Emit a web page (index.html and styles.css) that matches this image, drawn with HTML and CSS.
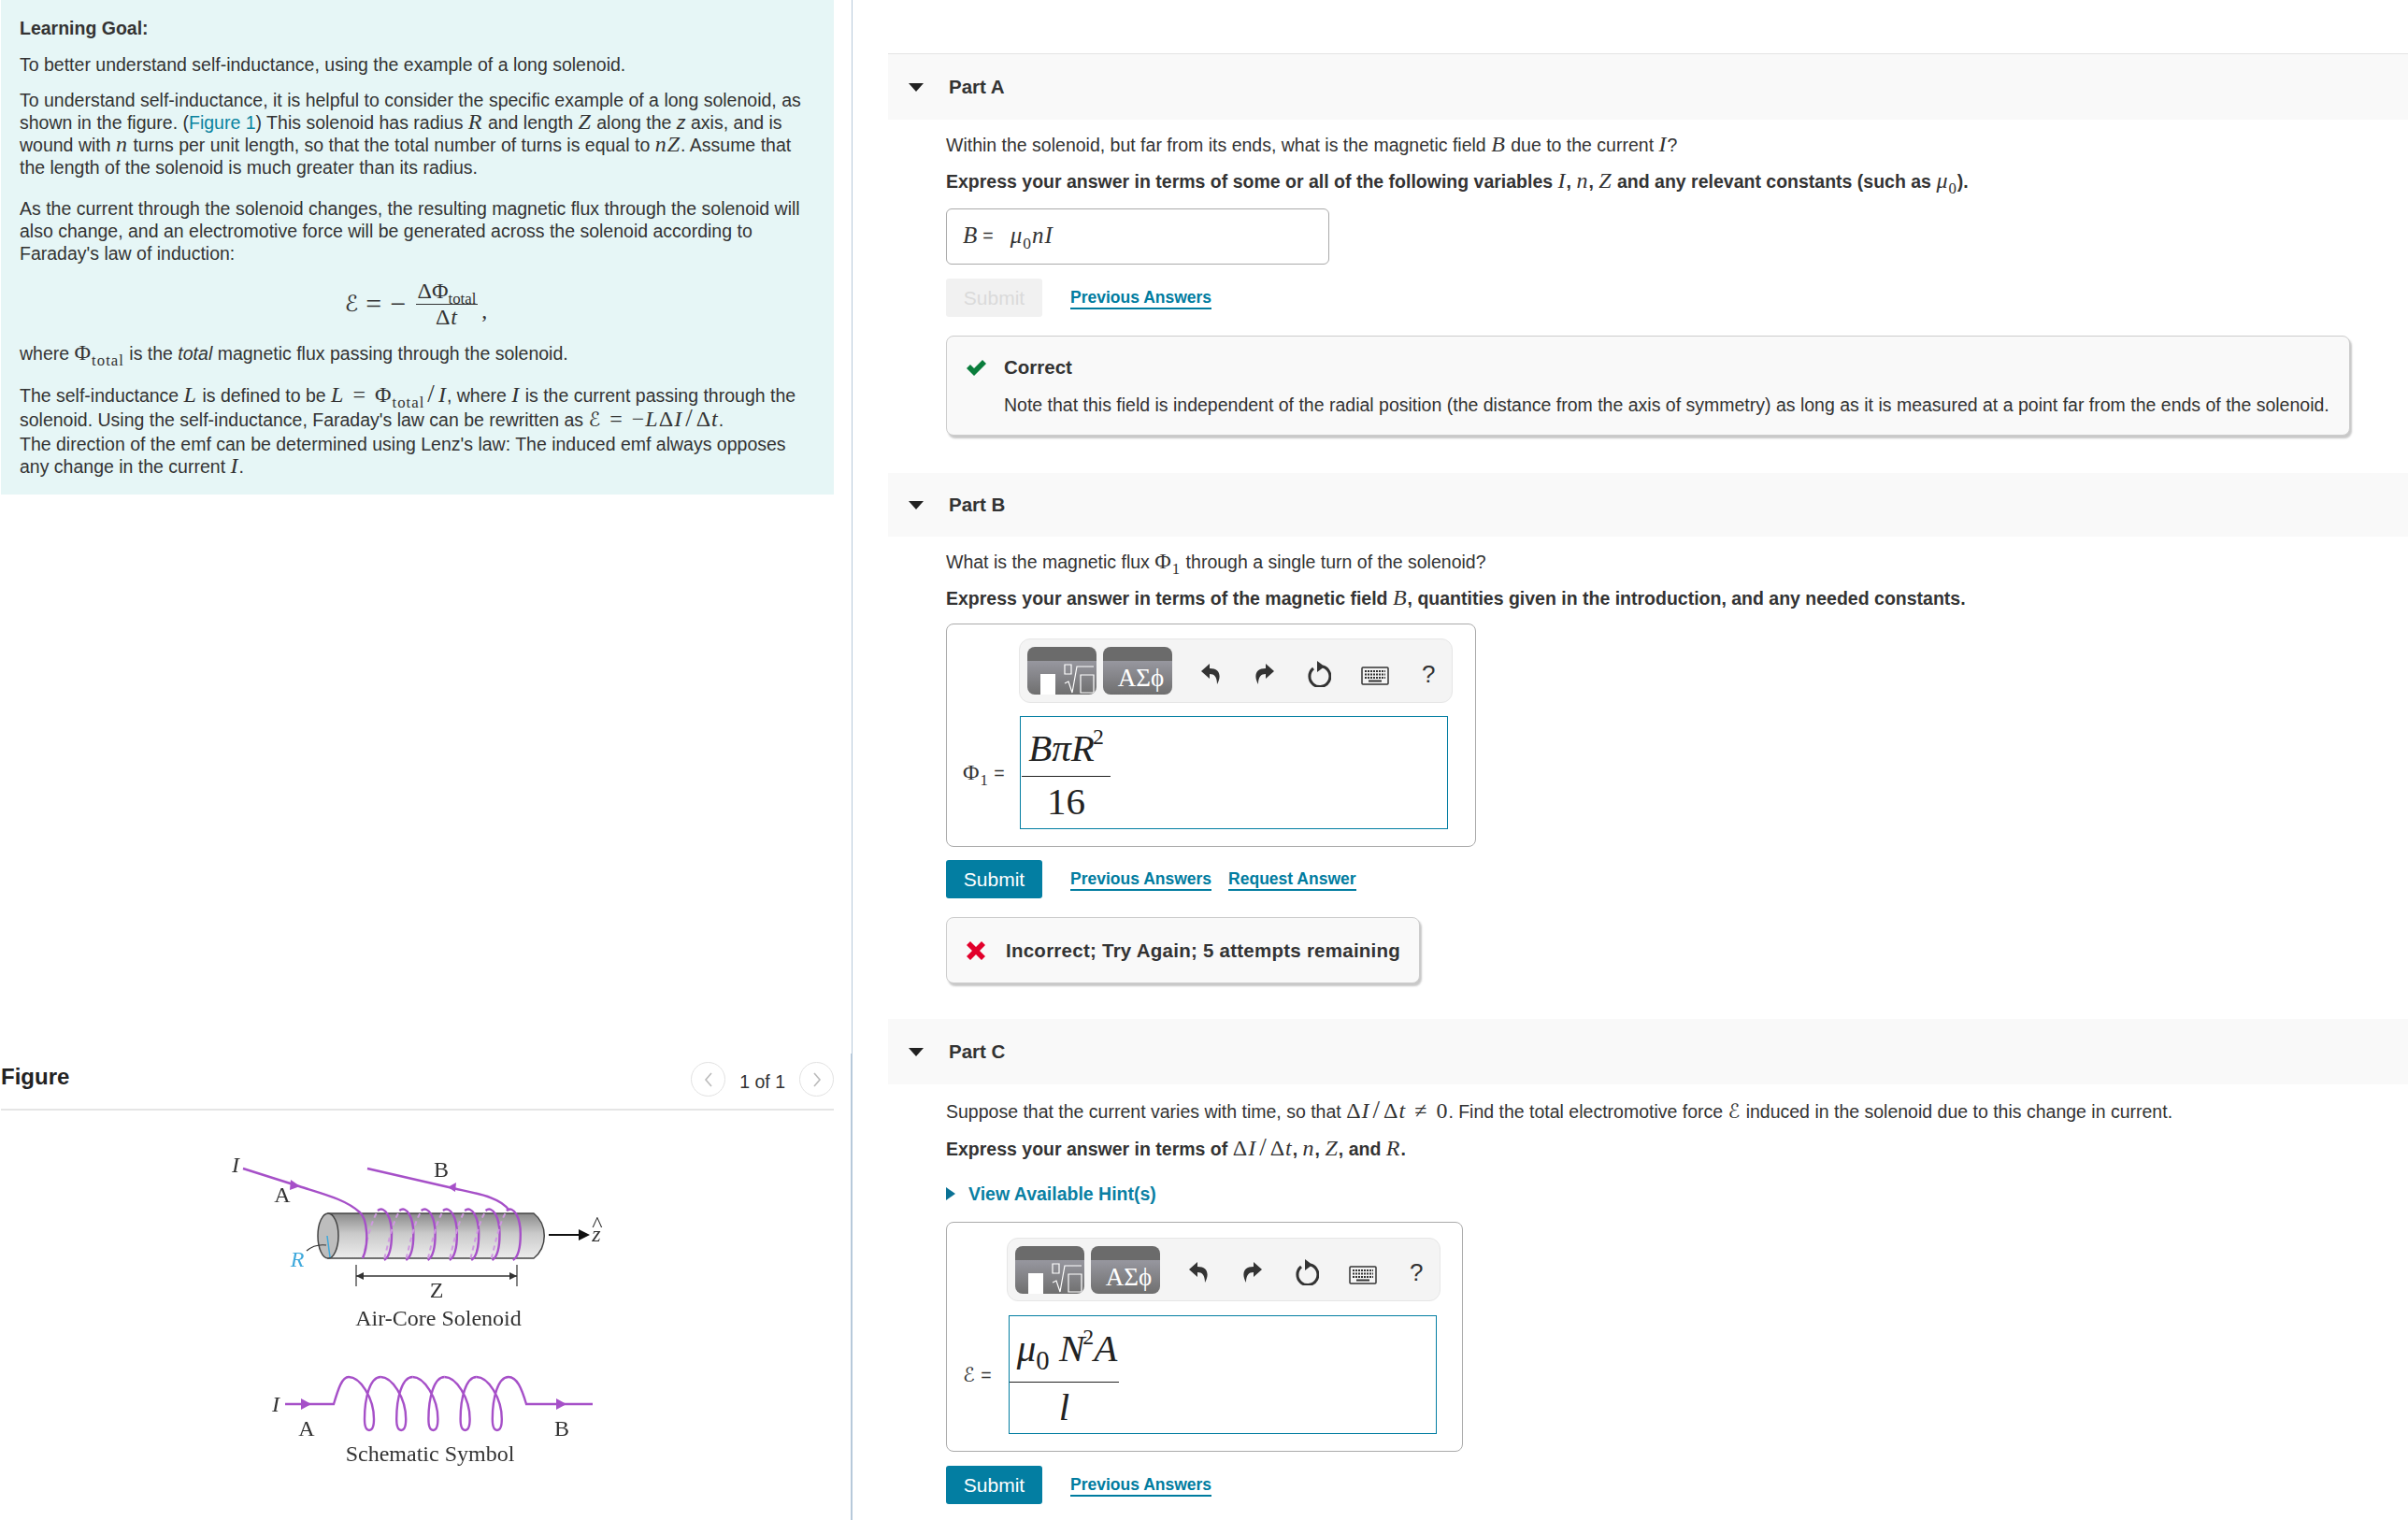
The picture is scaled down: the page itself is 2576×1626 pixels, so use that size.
FILE: index.html
```html
<!DOCTYPE html>
<html lang="en">
<head>
    <meta charset="UTF-8">
    <meta name="viewport" content="width=device-width, initial-scale=1.0">
    <title>Self-Inductance of a Long Solenoid</title>
    <link rel="stylesheet" href="styles.css">
</head>
<body>

<svg class="defs" width="0" height="0">
    <defs>
        <path id="icon-undo" d="M10 1 L1 9 L10 17 V12 C15 12 18 15 18 23 C23 14 21 6 10 6 Z"/>
        <path id="icon-redo" d="M12 1 L21 9 L12 17 V12 C7 12 4 15 4 23 C-1 14 1 6 12 6 Z"/>
    </defs>
</svg>

<div class="page">
    <aside class="left">
        <div class="left-top">
            <div class="intro">
                <p class="goal"><b>Learning Goal:</b></p>
                <p class="goal-text">To better understand self-inductance, using the example of a long solenoid.</p>
                <p class="para-1">To understand self-inductance, it is helpful to consider the specific example of a long solenoid, as shown in the figure. (<a class="fig-link">Figure 1</a>) This solenoid has radius <i class="m">R</i> and length <i class="m">Z</i> along the <i>z</i> axis, and is wound with <i class="m">n</i> turns per unit length, so that the total number of turns is equal to <i class="m">nZ</i>. Assume that the length of the solenoid is much greater than its radius.</p>
                <p class="para-2">As the current through the solenoid changes, the resulting magnetic flux through the solenoid will also change, and an electromotive force will be generated across the solenoid according to Faraday's law of induction:</p>
                <div class="equation">
                    <span class="m cal eq-e">ℰ</span><span class="m eq-sign">= −</span>
                    <span class="small-frac">
                        <span class="small-num m">ΔΦ<sub>total</sub></span>
                        <span class="small-den m">Δ<i>t</i></span>
                    </span><span class="m eq-comma">,</span>
                </div>
                <p class="para-3">where <span class="m">Φ<sub>total</sub></span> is the <i>total</i> magnetic flux passing through the solenoid.</p>
                <p class="para-4">The self-inductance <i class="m">L</i> is defined to be <i class="m">L</i><span class="m rel">=</span><span class="m">Φ<sub>total</sub><span class="sl">/</span><i>I</i></span>, where <i class="m">I</i> is the current passing through the solenoid. Using the self-inductance, Faraday's law can be rewritten as <span class="m cal">ℰ</span><span class="m rel">=</span><span class="m">−<i>L</i>Δ<i>I</i><span class="sl">/</span>Δ<i>t</i></span>.</p>
                <p class="para-5">The direction of the emf can be determined using Lenz's law: The induced emf always opposes any change in the current <i class="m">I</i>.</p>
            </div>
        </div>

        <div class="figure">
            <div class="figure-head">
                <h3>Figure</h3>
                <div class="pager">
                    <span class="pager-btn"><svg width="10" height="18" viewBox="0 0 10 18"><path d="M8 2 L2 9 L8 16" fill="none" stroke="#bbb" stroke-width="1.6"/></svg></span>
                    <span class="pager-text">1 of 1</span>
                    <span class="pager-btn"><svg width="10" height="18" viewBox="0 0 10 18"><path d="M2 2 L8 9 L2 16" fill="none" stroke="#bbb" stroke-width="1.6"/></svg></span>
                </div>
            </div>

            <svg class="figure-art" width="420" height="380" viewBox="230 1210 420 380">
                <defs>
                    <linearGradient id="core" x1="0" y1="0" x2="0" y2="1">
                        <stop offset="0" stop-color="#8a8a8a"/>
                        <stop offset="0.45" stop-color="#cacaca"/>
                        <stop offset="1" stop-color="#ececec"/>
                    </linearGradient>
                    <g id="turn">
                        <path d="M388 1346 C392 1330 397 1306 404 1296" class="wire-back"/>
                        <path d="M404 1295 C412 1289 419 1303 419 1320 C419 1335 416 1345 411 1348" class="wire"/>
                    </g>
                    <path id="loop" d="M373 1473 C385 1473 400 1495 400 1518 C400 1526 398 1530 395 1530 C392 1530 390 1526 390 1518 C390 1495 396 1473 407.200 1473" class="wire"/>
                </defs>

                <path d="M351 1298 H571 C586 1310 586 1334 571 1346 H351 Z" fill="url(#core)" stroke="#444" stroke-width="1.500"/>
                <ellipse cx="351" cy="1322" rx="11" ry="24" fill="#bdbdbd" stroke="#444" stroke-width="1.500"/>

                <use href="#turn"/>
                <use href="#turn" x="23.300"/>
                <use href="#turn" x="46.600"/>
                <use href="#turn" x="69.900"/>
                <use href="#turn" x="93.200"/>
                <use href="#turn" x="115.500"/>
                <use href="#turn" x="137.800"/>

                <path d="M260 1250 L320 1269 C345 1277 370 1283 385 1297 C393 1304 395 1330 388 1346" class="wire"/>
                <path d="M393 1250 L480 1270 C510 1277 535 1280 545 1295" class="wire"/>
                <path d="M321 1269 L311 1262 L310 1273 Z" class="wire-fill"/>
                <path d="M479 1270 L488 1265 L487 1275 Z" class="wire-fill"/>

                <path d="M350 1322 L353 1345" stroke="#3fa9dc" stroke-width="1.500" fill="none"/>
                <path d="M328 1338 C335 1332 341 1331 349 1332" stroke="#333" stroke-width="1.200" fill="none"/>

                <path d="M587 1321 H622" stroke="#111" stroke-width="1.800"/>
                <path d="M631 1321 L619 1315 V1327 Z" fill="#111"/>

                <path d="M381 1353 V1376 M553 1353 V1376" stroke="#333" stroke-width="1.200"/>
                <path d="M381 1365 H553" stroke="#333" stroke-width="1.500"/>
                <path d="M381 1365 L389 1361 V1369 Z M553 1365 L545 1361 V1369 Z" fill="#333"/>

                <text x="252" y="1254" class="fig-label italic" text-anchor="middle">I</text>
                <text x="302" y="1286" class="fig-label" text-anchor="middle">A</text>
                <text x="472" y="1259" class="fig-label" text-anchor="middle">B</text>
                <text x="318" y="1355" class="fig-label italic blue" text-anchor="middle">R</text>
                <text x="638" y="1328" class="fig-label italic" text-anchor="middle">z</text>
                <text x="639" y="1317" class="fig-label" text-anchor="middle">^</text>
                <text x="467" y="1388" class="fig-label" text-anchor="middle">Z</text>
                <text x="469" y="1418" class="fig-caption" text-anchor="middle">Air-Core Solenoid</text>

                <path d="M305 1502 H357 C362 1485 366 1473 373 1473" class="wire"/>
                <use href="#loop"/>
                <use href="#loop" x="34.200"/>
                <use href="#loop" x="68.400"/>
                <use href="#loop" x="102.600"/>
                <use href="#loop" x="136.800"/>
                <path d="M544 1473 C553 1473 558 1485 563 1502 H634" class="wire"/>
                <path d="M333 1502 L322 1496 V1508 Z M606 1502 L595 1496 V1508 Z" class="wire-fill"/>

                <text x="295" y="1510" class="fig-label italic" text-anchor="middle">I</text>
                <text x="328" y="1536" class="fig-label" text-anchor="middle">A</text>
                <text x="601" y="1536" class="fig-label" text-anchor="middle">B</text>
                <text x="460" y="1563" class="fig-caption" text-anchor="middle">Schematic Symbol</text>
            </svg>
        </div>
    </aside>

    <main class="right">
        <section class="part part-a">
            <div class="part-header"><span class="caret-down"></span><h4>Part A</h4></div>
            <div class="part-body">
                <p class="prompt">Within the solenoid, but far from its ends, what is the magnetic field <i class="m">B</i> due to the current <i class="m">I</i>?</p>
                <p class="instruct">Express your answer in terms of some or all of the following variables <i class="m">I</i>, <i class="m">n</i>, <i class="m">Z</i> and any relevant constants (such as <span class="m"><i>μ</i><sub>0</sub></span>).</p>
                <div class="answer-static">
                    <i class="m">B</i><span class="eq">=</span><span class="m"><i>μ</i><sub>0</sub><i>nI</i></span>
                </div>
                <div class="actions">
                    <button class="submit disabled">Submit</button>
                    <a class="action-link">Previous Answers</a>
                </div>
                <div class="feedback correct">
                    <div class="feedback-title">
                        <svg class="check" width="21" height="17" viewBox="0 0 21 17"><path d="M0 9 L4 5 L8 9 L17 0 L21 4 L8 17 Z" fill="#0a7d3c"/></svg>
                        <b>Correct</b>
                    </div>
                    <p>Note that this field is independent of the radial position (the distance from the axis of symmetry) as long as it is measured at a point far from the ends of the solenoid.</p>
                </div>
            </div>
        </section>

        <section class="part part-b">
            <div class="part-header"><span class="caret-down"></span><h4>Part B</h4></div>
            <div class="part-body">
                <p class="prompt">What is the magnetic flux <span class="m">Φ<sub>1</sub></span> through a single turn of the solenoid?</p>
                <p class="instruct">Express your answer in terms of the magnetic field <i class="m">B</i>, quantities given in the introduction, and any needed constants.</p>
                <div class="answer answer-b">
                    <div class="toolbar">
                        <span class="tool-btn">
                            <svg width="74" height="36" viewBox="0 0 74 36"><rect x="14" y="14" width="16" height="22" fill="#fff"/><path d="M40 4 h7 v10 h-7 Z M57 15 h14 v19 h-14 Z" fill="none" stroke="#fff" stroke-width="1.200"/><path d="M40 24 L44 22 L48 34 L53 6 H71" fill="none" stroke="#fff" stroke-width="1.200"/></svg>
                        </span>
                        <span class="tool-btn tool-greek">ΑΣϕ</span>
                        <svg class="tool-icon undo" width="22" height="24" viewBox="0 0 22 24"><use href="#icon-undo"/></svg>
                        <svg class="tool-icon redo" width="22" height="24" viewBox="0 0 22 24"><use href="#icon-redo"/></svg>
                        <svg class="tool-icon reset" width="26" height="28" viewBox="0 0 26 28"><path d="M7 8 A11 11 0 1 0 17 6" fill="none" stroke="#333" stroke-width="3"/><path d="M11 0 L19 6 L11 12 Z" fill="#333"/></svg>
                        <svg class="tool-icon keys" width="30" height="20" viewBox="0 0 30 20"><rect x="1" y="1" width="28" height="18" rx="1" fill="none" stroke="#333" stroke-width="1.500"/><path d="M4 5 H26 M4 8.500 H26 M4 12 H26" stroke="#333" stroke-width="2" stroke-dasharray="2 1"/><path d="M8 15.500 H22" stroke="#333" stroke-width="2"/></svg>
                        <span class="tool-help">?</span>
                    </div>
                    <span class="answer-label"><span class="m">Φ<sub>1</sub></span> =</span>
                    <div class="math-input">
                        <span class="frac frac-b">
                            <span class="num"><i>BπR</i><sup>2</sup></span>
                            <span class="den">16</span>
                        </span>
                    </div>
                </div>
                <div class="actions actions-b">
                    <button class="submit">Submit</button>
                    <a class="action-link">Previous Answers</a>
                    <a class="action-link">Request Answer</a>
                </div>
                <div class="feedback incorrect">
                    <svg class="cross" width="20" height="20" viewBox="0 0 20 20"><path d="M4 0 L10 6 L16 0 L20 4 L14 10 L20 16 L16 20 L10 14 L4 20 L0 16 L6 10 L0 4 Z" fill="#e2002b"/></svg>
                    <b>Incorrect; Try Again; 5 attempts remaining</b>
                </div>
            </div>
        </section>

        <section class="part part-c">
            <div class="part-header"><span class="caret-down"></span><h4>Part C</h4></div>
            <div class="part-body">
                <p class="prompt">Suppose that the current varies with time, so that <span class="m">Δ<i>I</i><span class="sl">/</span>Δ<i>t</i></span><span class="m rel">≠</span><span class="m">0</span>. Find the total electromotive force <span class="m cal">ℰ</span> induced in the solenoid due to this change in current.</p>
                <p class="instruct instruct-c">Express your answer in terms of <span class="m">Δ<i>I</i><span class="sl">/</span>Δ<i>t</i></span>, <i class="m">n</i>, <i class="m">Z</i>, and <i class="m">R</i>.</p>
                <p class="hint"><span class="caret-right"></span>View Available Hint(s)</p>
                <div class="answer answer-c">
                    <div class="toolbar">
                        <span class="tool-btn">
                            <svg width="74" height="36" viewBox="0 0 74 36"><rect x="14" y="14" width="16" height="22" fill="#fff"/><path d="M40 4 h7 v10 h-7 Z M57 15 h14 v19 h-14 Z" fill="none" stroke="#fff" stroke-width="1.200"/><path d="M40 24 L44 22 L48 34 L53 6 H71" fill="none" stroke="#fff" stroke-width="1.200"/></svg>
                        </span>
                        <span class="tool-btn tool-greek">ΑΣϕ</span>
                        <svg class="tool-icon undo" width="22" height="24" viewBox="0 0 22 24"><use href="#icon-undo"/></svg>
                        <svg class="tool-icon redo" width="22" height="24" viewBox="0 0 22 24"><use href="#icon-redo"/></svg>
                        <svg class="tool-icon reset" width="26" height="28" viewBox="0 0 26 28"><path d="M7 8 A11 11 0 1 0 17 6" fill="none" stroke="#333" stroke-width="3"/><path d="M11 0 L19 6 L11 12 Z" fill="#333"/></svg>
                        <svg class="tool-icon keys" width="30" height="20" viewBox="0 0 30 20"><rect x="1" y="1" width="28" height="18" rx="1" fill="none" stroke="#333" stroke-width="1.500"/><path d="M4 5 H26 M4 8.500 H26 M4 12 H26" stroke="#333" stroke-width="2" stroke-dasharray="2 1"/><path d="M8 15.500 H22" stroke="#333" stroke-width="2"/></svg>
                        <span class="tool-help">?</span>
                    </div>
                    <span class="answer-label"><span class="m cal">ℰ</span> =</span>
                    <div class="math-input">
                        <span class="frac frac-c">
                            <span class="num"><i>μ</i><sub>0</sub> <i>N</i><sup>2</sup><i>A</i></span>
                            <span class="den"><i>l</i></span>
                        </span>
                    </div>
                </div>
                <div class="actions">
                    <button class="submit">Submit</button>
                    <a class="action-link">Previous Answers</a>
                </div>
            </div>
        </section>
    </main>
</div>

</body>
</html>
```

FILE: styles.css
```css
body {
    font-family: "Liberation Sans", Arial, sans-serif;
    font-size: 19.5px;
    line-height: 24px;
    color: #333;
    background-color: #fff;
    margin: 0;
    padding: 0;
    overflow: hidden;
}

p {
    margin: 0;
}

.defs {
    position: absolute;
}

.page {
    display: grid;
    grid-template-columns: 912px 1fr;
    height: 1626px;
    overflow: hidden;
}

/* Left column */
.left-top {
    height: 1127px;
    box-sizing: border-box;
    border-right: 1px solid #b7c9da;
}

.intro {
    width: 891px;
    margin-left: 1px;
    height: 529px;
    box-sizing: border-box;
    padding: 18px 20px 0 20px;
    background-color: #e6f6f6;
}

.m {
    font-family: "Liberation Serif", "DejaVu Serif", serif;
    font-size: 24px;
    line-height: 0;
    letter-spacing: 1px;
}

i.m, .m i {
    font-style: italic;
}

sub, sup {
    font-size: 70%;
    line-height: 0;
}

.cal {
    font-family: "DejaVu Sans", "Liberation Serif", serif;
    font-size: 21px;
}

/* relation signs get wide spacing in the math text */
.rel {
    margin: 0 9px;
}

.sl {
    margin: 0 3px;
    font-size: 27px;
    line-height: 0;
}

.fig-link {
    color: #0a83a0;
}

.goal-text {
    margin-top: 15px;
}

.para-1 {
    margin-top: 14px;
}

.para-2 {
    margin-top: 20px;
}

.equation {
    display: flex;
    justify-content: center;
    align-items: center;
    height: 83px;
    padding-right: 2px;
}

.equation .m {
    line-height: 24px;
}

.eq-e {
    font-size: 24px;
}

.eq-sign {
    margin: 0 9px 0 7px;
    font-size: 30px;
    letter-spacing: 1px;
}

.small-frac {
    display: inline-flex;
    flex-direction: column;
    align-items: center;
    line-height: 24px;
}

.small-num {
    border-bottom: 1px solid #333;
    padding: 0 2px 2px 2px;
    letter-spacing: 0;
}

.small-den {
    padding-top: 1px;
}

.eq-comma {
    align-self: flex-end;
    margin: 0 0 22px 4px;
}

.para-4 {
    margin-top: 20px;
    line-height: 26px;
}

.para-5 {
    margin-top: 1px;
}

.figure {
    width: 912px;
    height: 499px;
    box-sizing: border-box;
    padding: 8px 0 0 1px;
    border-right: 2px solid #b7c9da;
}

.figure-head {
    display: flex;
    justify-content: space-between;
    align-items: center;
    width: 891px;
    height: 51px;
    border-bottom: 2px solid #e5e5e5;
}

.figure-head h3 {
    margin: 0 0 18px 0;
    font-size: 24px;
    color: #222;
}

.pager {
    display: flex;
    align-items: center;
    gap: 15px;
    margin-bottom: 12px;
}

.pager-btn {
    display: flex;
    align-items: center;
    justify-content: center;
    width: 35px;
    height: 35px;
    border: 1px solid #e2e2e2;
    border-radius: 50%;
}

.pager-text {
    margin-top: 4px;
}

.figure-art {
    display: block;
    margin: 22px 0 0 229px;
    filter: blur(0.5px);
}

.wire {
    fill: none;
    stroke: #a650c8;
    stroke-width: 2.4;
}

.wire-back {
    fill: none;
    stroke: #cf9ae0;
    stroke-width: 2;
    stroke-dasharray: 5 4;
}

.wire-fill {
    fill: #a650c8;
}

.fig-label {
    font-family: "Liberation Serif", serif;
    font-size: 24px;
    fill: #333;
}

.fig-label.italic {
    font-style: italic;
}

.fig-label.blue {
    fill: #3fa9dc;
}

.fig-caption {
    font-family: "Liberation Serif", serif;
    font-size: 24px;
    fill: #333;
}

/* Right column */
.right {
    padding-left: 38px;
    min-width: 0;
}

.part-a {
    margin-top: 57px;
    border-top: 1px solid #e4e4e4;
}

.part-b {
    margin-top: 40px;
}

.part-c {
    margin-top: 38px;
}

.part-header {
    display: flex;
    align-items: center;
    height: 70px;
    background-color: #f9f9f9;
}

.part-b .part-header {
    height: 68px;
}

.part-header h4 {
    margin: 0;
    font-size: 20.5px;
}

.caret-down {
    width: 0;
    height: 0;
    margin: 0 27px 0 22px;
    border-left: 8px solid transparent;
    border-right: 8px solid transparent;
    border-top: 9px solid #222;
}

.part-body {
    padding: 15px 0 0 62px;
}

.part-c .part-body {
    padding-top: 17px;
}

.instruct {
    margin-top: 15px;
    font-weight: bold;
}

.instruct .m {
    font-weight: normal;
}

.instruct-c {
    margin-top: 16px;
}

.hint {
    margin-top: 24px;
    color: #0a7fa3;
    font-weight: bold;
    display: flex;
    align-items: center;
}

.caret-right {
    width: 0;
    height: 0;
    margin-right: 14px;
    border-top: 7px solid transparent;
    border-bottom: 7px solid transparent;
    border-left: 10px solid #0a7295;
}

.answer-static {
    display: flex;
    align-items: center;
    width: 410px;
    height: 60px;
    margin-top: 17px;
    padding: 0 0 2px 17px;
    box-sizing: border-box;
    border: 1px solid #aaa;
    border-radius: 6px;
}

.answer-static .m {
    font-size: 25px;
    line-height: 24px;
}

.answer-static .eq {
    margin: 0 18px 0 5px;
}

.actions {
    display: flex;
    align-items: center;
    margin-top: 15px;
}

.actions-b {
    margin-top: 14px;
}

.submit {
    width: 103px;
    height: 41px;
    padding: 0;
    font-family: inherit;
    font-size: 21px;
    color: #fff;
    background-color: #037ea2;
    border: none;
    border-radius: 3px;
    margin-right: 30px;
}

.submit.disabled {
    color: #dadada;
    background-color: #f1f1f1;
}

.action-link {
    margin-right: 18px;
    font-size: 17.5px;
    line-height: 22px;
    font-weight: bold;
    color: #007c9f;
    border-bottom: 2px solid #007c9f;
}

.feedback {
    margin-top: 20px;
    box-sizing: border-box;
    border: 1px solid #ccc;
    border-radius: 8px;
    background-color: #f9f9f9;
    box-shadow: 2px 3px 2px #c8c8c8;
}

.correct {
    width: 1502px;
    height: 107px;
    padding: 21px 0 0 21px;
}

.feedback-title {
    display: flex;
    align-items: center;
    gap: 19px;
    font-size: 20.5px;
}

.correct p {
    margin: 16px 0 0 40px;
}

.incorrect {
    display: flex;
    align-items: center;
    gap: 22px;
    width: 507px;
    height: 71px;
    padding-left: 21px;
    font-size: 20.5px;
    letter-spacing: 0.25px;
}

.answer {
    display: grid;
    box-sizing: border-box;
    border: 1px solid #aaa;
    border-radius: 8px;
    margin-top: 15px;
}

.answer-b {
    width: 567px;
    height: 239px;
    grid-template-columns: 77px auto;
    grid-template-rows: 69px 121px;
    padding-top: 15px;
    row-gap: 14px;
}

.answer-c {
    width: 553px;
    height: 246px;
    grid-template-columns: 64px auto;
    grid-template-rows: 68px 127px;
    padding-top: 16px;
    row-gap: 15px;
    margin-top: 18px;
}

.toolbar {
    grid-column: 2;
    grid-row: 1;
    display: flex;
    align-items: center;
    width: 464px;
    box-sizing: border-box;
    padding-left: 8px;
    background-color: #f4f4f4;
    border: 1px solid #e6e6e6;
    border-radius: 12px;
}

.tool-btn {
    display: block;
    width: 74px;
    height: 51px;
    margin-right: 7px;
    box-sizing: border-box;
    padding-top: 15px;
    border-radius: 8px;
    overflow: hidden;
    background: linear-gradient(#6b6b6b 15px, #97979f 15px, #6f6f6f);
}

.tool-btn svg {
    display: block;
}

.tool-greek {
    padding-left: 7px;
    text-align: center;
    font-family: "Liberation Serif", serif;
    font-size: 27px;
    line-height: 36px;
    color: #fff;
    margin-right: 0;
}

.tool-icon {
    display: block;
    margin-top: 6px;
    fill: #333;
}

.undo {
    margin-left: 30px;
}

.redo {
    margin-left: 36px;
}

.reset {
    margin-left: 34px;
}

.keys {
    margin: 11px 0 0 32px;
}

.tool-help {
    margin: 6px 0 0 35px;
    font-size: 26px;
}

.answer-label {
    grid-column: 1;
    grid-row: 2;
    align-self: center;
    padding-left: 17px;
}

.math-input {
    grid-column: 2;
    grid-row: 2;
    width: 458px;
    margin-left: 1px;
    box-sizing: border-box;
    border: 1px solid #037ea2;
    font-family: "Liberation Serif", serif;
    font-size: 41px;
    display: flex;
    align-items: flex-start;
}

.answer-c .math-input {
    width: 458px;
    margin-left: 2px;
}

.frac {
    display: inline-flex;
    flex-direction: column;
    align-items: center;
    color: #222;
}

.frac sup {
    margin-left: -2px;
    font-size: 58%;
    vertical-align: 18px;
}

.frac-b {
    margin-left: 1px;
    width: 95px;
}

.frac-c {
    width: 117px;
}

.num {
    display: block;
    width: 100%;
    box-sizing: border-box;
    text-align: center;
    border-bottom: 1px solid #222;
}

.frac-b .num {
    height: 64px;
    line-height: 66px;
}

.frac-c .num {
    height: 71px;
    line-height: 68px;
    padding-left: 6px;
}

.den {
    line-height: 52px;
}
```
